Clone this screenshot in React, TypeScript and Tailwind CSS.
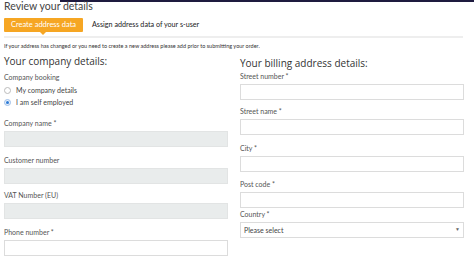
import React from 'react';

const Label: React.FC<{ text: string }> = ({ text }) => (
  <div className="text-[7px] leading-[10px] text-[#555] mb-[3px]">{text}</div>
);

const Field: React.FC<{ label: string; disabled?: boolean; mt: string }> = ({ label, disabled, mt }) => (
  <div className={mt}>
    <Label text={label} />
    <div
      className={`h-[16px] w-full border ${disabled ? 'bg-[#e9ecec] border-[#e2e4e4]' : 'bg-white border-[#dcdcdc]'}`}
    />
  </div>
);

const App: React.FC = () => {
  return (
    <div className="w-[474px] h-[261px] bg-white overflow-hidden relative" style={{ fontFamily: 'Lato, "Open Sans", sans-serif' }}>
      <div className="h-[2px] bg-[#1e1b3f] ml-[60px]" />
      <div className="px-[4px]">
        <div className="text-[10.5px] leading-[11px] -mt-[1px] text-[#444]">
          Review your details
        </div>
        <div className="flex items-center mt-[6px] h-[14px]">
          <div className="relative bg-[#f6a623] text-white text-[7.5px] h-[14px] w-[79px] flex items-center justify-center rounded-[1px]">
            Create address data
            <div className="absolute left-[36px] -bottom-[3px] w-0 h-0 border-l-[3px] border-r-[3px] border-t-[3px] border-l-transparent border-r-transparent border-t-[#f6a623]" />
          </div>
          <div className="ml-[9px] text-[7.2px] text-[#222]">Assign address data of your s-user</div>
        </div>
        <div className="mt-[4px] h-[2px] w-[459px] bg-[#eeeeee]" />
        <div className="mt-[5px] text-[5.5px] leading-[7px] text-[#333]">
          If your address has changed or you need to create a new address please add prior to submitting your order.
        </div>
        <div className="flex mt-[5px]">
          <div className="w-[224px]">
            <div className="text-[10px] leading-[13px] text-[#333]" style={{ fontFamily: '"Open Sans", sans-serif' }}>
              Your company details:
            </div>
            <div className="text-[7px] leading-[10px] text-[#555] mt-[4px]">Company booking</div>
            <div className="flex items-center mt-[3px] h-[10px]">
              <div className="w-[7px] h-[7px] rounded-full border border-[#bbb]" />
              <span className="ml-[5px] text-[7px] text-[#444]">My company details</span>
            </div>
            <div className="flex items-center mt-[2px] h-[10px]">
              <div className="w-[7px] h-[7px] rounded-full border border-[#9fbfe8] bg-[#e6f0fb] flex items-center justify-center">
                <div className="w-[3px] h-[3px] rounded-full bg-[#2d7ad6]" />
              </div>
              <span className="ml-[5px] text-[7px] text-[#444]">I am self employed</span>
            </div>
            <Field label="Company name *" disabled mt="mt-[11px]" />
            <Field label="Customer number" disabled mt="mt-[8px]" />
            <Field label="VAT Number (EU)" disabled mt="mt-[6px]" />
            <Field label="Phone number *" mt="mt-[8px]" />
          </div>
          <div className="w-[224px] ml-[12px]">
            <div className="text-[10px] leading-[13px] text-[#333] mt-[2px]" style={{ fontFamily: '"Open Sans", sans-serif' }}>
              Your billing address details:
            </div>
            <Field label="Street number *" mt="mt-[1px]" />
            <Field label="Street name *" mt="mt-[6px]" />
            <Field label="City *" mt="mt-[8px]" />
            <Field label="Post code *" mt="mt-[7px]" />
            <div className="mt-[1px]">
              <Label text="Country *" />
              <div className="h-[16px] w-full border border-[#dcdcdc] bg-white flex items-center justify-between px-[3px]">
                <span className="text-[7px] text-[#444]">Please select</span>
                <span className="text-[5px] text-[#666]">▼</span>
              </div>
            </div>
          </div>
        </div>
      </div>
    </div>
  );
};

export default App;
